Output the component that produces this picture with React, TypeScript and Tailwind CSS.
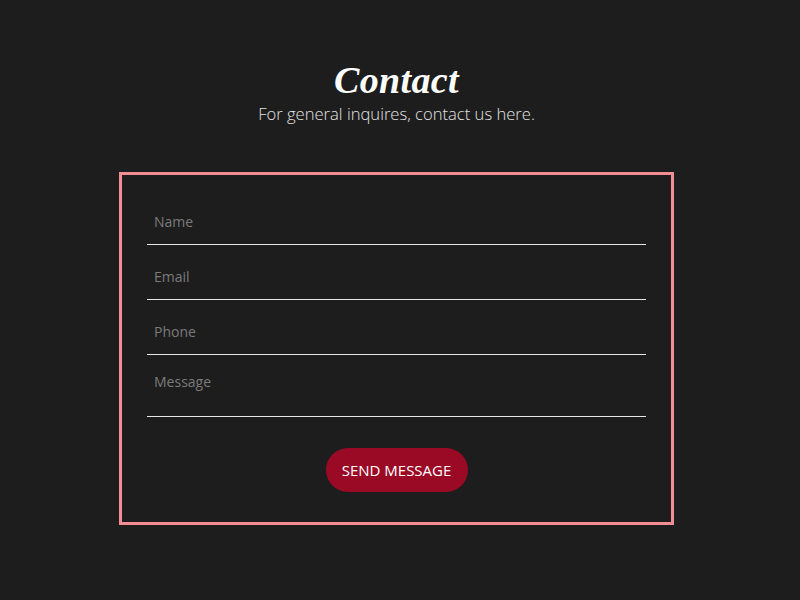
const FIELDS = [
  { name: "name", label: "Name", type: "text" },
  { name: "email", label: "Email", type: "email" },
  { name: "phone", label: "Phone", type: "tel" },
];

const App = () => {
  return (
    <div className="min-h-[600px] w-full bg-[#1d1d1d] font-['Open_Sans',sans-serif]">
      <section className="w-[793px] flex flex-col items-center pt-[58px]">
        {/* heading */}
        <h2 className="font-['Liberation_Serif',serif] italic font-bold text-[38px] leading-[44px] text-white tracking-[0.01em]">
          Contact
        </h2>
        <p className="text-[16.6px] leading-[24px] font-light text-[#e2e2e2]">
          For general inquires, contact us here.
        </p>

        {/* form */}
        <form className="mt-[46px] w-[555px] border-[3px] border-[#f38d95] px-[25px] pt-[25px] pb-[30px] flex flex-col">
          <div className="flex flex-col gap-[10px]">
            {FIELDS.map((field) => (
              <input
                key={field.name}
                type={field.type}
                placeholder={field.label}
                className="h-[45px] w-full bg-transparent border-b border-[#e6e6e6] pl-[7px] pb-[2px] text-[14px] text-white placeholder:text-[#7b7b7b] outline-none"
              />
            ))}
            <textarea
              placeholder="Message"
              className="h-[52px] w-full resize-none bg-transparent border-b border-[#e6e6e6] pl-[7px] pt-[7px] text-[14px] leading-[20px] text-white placeholder:text-[#7b7b7b] outline-none"
            />
          </div>

          <div className="mt-[31px] flex justify-center">
            <button
              type="button"
              className="h-[44px] w-[142px] rounded-full bg-[#9b0a25] text-[15px] text-white"
            >
              SEND MESSAGE
            </button>
          </div>
        </form>
      </section>
    </div>
  );
};

export default App;
